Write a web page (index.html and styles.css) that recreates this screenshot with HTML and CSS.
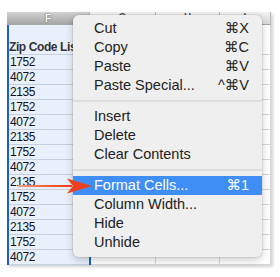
FILE: index.html
```html
<!DOCTYPE html>
<html>
<head>
<meta charset="utf-8">
<link rel="stylesheet" href="styles.css">
</head>
<body>
<div class="stage">
  <div class="sheet">
    <div class="grid">
      <div class="hd hd-sel">F</div><div class="hd">G</div><div class="hd">H</div><div class="hd">I</div>
      <div class="c f title">Zip Code List</div><div class="c"></div><div class="c"></div><div class="c"></div>
      <div class="c f">1752</div><div class="c"></div><div class="c"></div><div class="c"></div>
      <div class="c f">4072</div><div class="c"></div><div class="c"></div><div class="c"></div>
      <div class="c f">2135</div><div class="c"></div><div class="c"></div><div class="c"></div>
      <div class="c f">1752</div><div class="c"></div><div class="c"></div><div class="c"></div>
      <div class="c f">4072</div><div class="c"></div><div class="c"></div><div class="c"></div>
      <div class="c f">2135</div><div class="c"></div><div class="c"></div><div class="c"></div>
      <div class="c f">1752</div><div class="c"></div><div class="c"></div><div class="c"></div>
      <div class="c f">4072</div><div class="c"></div><div class="c"></div><div class="c"></div>
      <div class="c f">2135</div><div class="c"></div><div class="c"></div><div class="c"></div>
      <div class="c f">1752</div><div class="c"></div><div class="c"></div><div class="c"></div>
      <div class="c f">4072</div><div class="c"></div><div class="c"></div><div class="c"></div>
      <div class="c f">2135</div><div class="c"></div><div class="c"></div><div class="c"></div>
      <div class="c f">1752</div><div class="c"></div><div class="c"></div><div class="c"></div>
      <div class="c f">4072</div><div class="c"></div><div class="c"></div><div class="c"></div>
    </div>
    <div class="selbox"></div>
  </div>

  <div class="menu">
    <div class="item"><span>Cut</span><span class="sc">⌘X</span></div>
    <div class="item"><span>Copy</span><span class="sc">⌘C</span></div>
    <div class="item"><span>Paste</span><span class="sc">⌘V</span></div>
    <div class="item"><span>Paste Special...</span><span class="sc">^⌘V</span></div>
    <div class="sep"></div>
    <div class="item"><span>Insert</span></div>
    <div class="item"><span>Delete</span></div>
    <div class="item"><span>Clear Contents</span></div>
    <div class="sep"></div>
    <div class="item active"><span>Format Cells...</span><span class="sc">⌘1</span></div>
    <div class="item"><span>Column Width...</span></div>
    <div class="item"><span>Hide</span></div>
    <div class="item"><span>Unhide</span></div>
  </div>

  <svg class="arrow" width="100" height="20" viewBox="0 0 100 20">
    <defs>
      <linearGradient id="ag" x1="0" y1="0" x2="1" y2="0">
        <stop offset="0" stop-color="#f7a080"/>
        <stop offset="0.5" stop-color="#f2603a"/>
        <stop offset="1" stop-color="#ee3a1a"/>
      </linearGradient>
    </defs>
    <rect x="18" y="9" width="54" height="2" fill="url(#ag)"/>
    <polygon points="92,10 67,2.5 73,10 67,17.5" fill="#ef3f1c"/>
  </svg>
</div>
</body>
</html>
```

FILE: styles.css
```css
html, body {
  margin: 0;
  padding: 0;
  background: #ffffff;
}
.stage {
  position: relative;
  width: 280px;
  height: 277px;
  overflow: hidden;
  padding: 12px 0 0 7px;
  box-sizing: border-box;
}
.sheet {
  position: relative;
  width: 264px;
  box-shadow: 2px 2px 3px rgba(0,0,0,0.18);
  background: #fff;
}
.grid {
  display: grid;
  grid-template-columns: 83px 66px 64px 51px;
  grid-template-rows: 13px 30px repeat(14, 15px);
  font-family: "Liberation Sans", Arial, sans-serif;
}
.hd {
  background: linear-gradient(#f2f2f2, #d9d9d9);
  border-right: 1px solid #b8b8b8;
  border-bottom: 1px solid #a8a8a8;
  box-sizing: border-box;
  font-size: 10px;
  font-weight: bold;
  color: #555;
  text-align: center;
  line-height: 12px;
}
.hd-sel {
  background: linear-gradient(#d2d2d2, #a6a6a6);
  color: #ffffff;
  text-shadow: 0 0 1px #444, 0 0 1px #444;
  font-size: 11px;
}
.c {
  border-right: 1px solid #d6d6d6;
  border-bottom: 1px solid #d6d6d6;
  box-sizing: border-box;
  font-size: 12px;
  letter-spacing: -0.4px;
  color: #111;
  line-height: 14px;
  white-space: nowrap;
  overflow: hidden;
}
.f {
  background: #e9f0fb;
  border-bottom-color: #c4cfdf;
  border-right-color: #c4cfdf;
  padding-left: 3px;
}
.title {
  font-weight: bold;
  color: #333;
  padding-left: 2px;
  padding-top: 15px;
}
.selbox {
  position: absolute;
  left: 0;
  top: 13px;
  width: 84px;
  bottom: 0;
  border-left: 2px solid #1a5fd4;
  border-right: 2px solid #1a5fd4;
  box-sizing: border-box;
}
.menu {
  position: absolute;
  left: 73px;
  top: 15px;
  width: 189px;
  height: 242px;
  box-sizing: border-box;
  padding: 4px 0;
  background: #efefef;
  border-radius: 6px;
  box-shadow: 0 0 0 1px rgba(0,0,0,0.07), 0 3px 9px rgba(0,0,0,0.2);
  font-family: "Liberation Sans", "DejaVu Sans", Arial, sans-serif;
  font-size: 14.5px;
  color: #222;
}
.item {
  height: 19px;
  line-height: 19px;
  padding: 0 13px 0 21px;
  display: flex;
  justify-content: space-between;
}
.item.active {
  background: #3f8ef6;
  color: #ffffff;
}
.sc {
  font-family: "Liberation Sans", "DejaVu Sans", sans-serif;
}
.sep {
  height: 12px;
  display: flex;
  align-items: center;
}
.sep::after {
  content: "";
  display: block;
  width: 100%;
  height: 2px;
  background: #dedede;
}
.arrow {
  position: absolute;
  left: 0;
  top: 176px;
}
```
